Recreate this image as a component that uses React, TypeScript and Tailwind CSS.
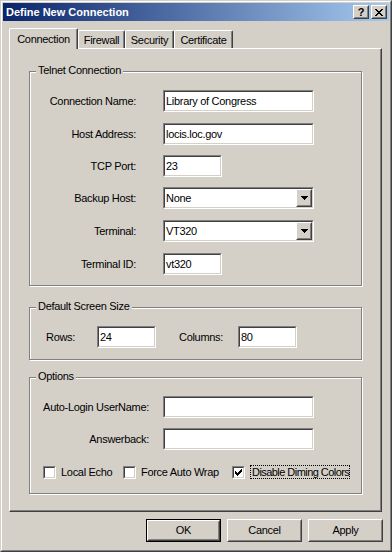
import type { ReactNode } from 'react';

function Sunken({ className = '', children }: { className?: string; children?: ReactNode }) {
    return (
        <div className={`border border-t-[#808080] border-l-[#808080] border-r-white border-b-white ${className}`}>
            <div className="flex h-full w-full items-center border border-t-[#404040] border-l-[#404040] border-r-[#d4d0c8] border-b-[#d4d0c8] bg-white">
                {children}
            </div>
        </div>
    );
}

function Raised({ className = '', children }: { className?: string; children?: ReactNode }) {
    return (
        <div className={`flex border border-t-white border-l-white border-r-[#404040] border-b-[#404040] bg-[#d4d0c8] ${className}`}>
            <div className="flex flex-1 items-center justify-center border border-t-[#d4d0c8] border-l-[#d4d0c8] border-r-[#808080] border-b-[#808080]">
                {children}
            </div>
        </div>
    );
}

function TextBox({ value = '', className }: { value?: string; className: string }) {
    return (
        <Sunken className={`h-[22px] ${className}`}>
            <span className="pl-px leading-[13px]">{value}</span>
        </Sunken>
    );
}

function Combo({ value }: { value: string }) {
    return (
        <Sunken className="h-[22px] w-[151px]">
            <span className="flex-1 pl-px leading-[13px]">{value}</span>
            <Raised className="h-full w-[16px]">
                <svg width="7" height="4" viewBox="0 0 7 4" shapeRendering="crispEdges">
                    <path d="M0 0h7v1h-7z M1 1h5v1h-5z M2 2h3v1h-3z M3 3h1v1h-1z" fill="#000" />
                </svg>
            </Raised>
        </Sunken>
    );
}

function Group({ title, className, children }: { title: string; className: string; children: ReactNode }) {
    return (
        <div className={`relative w-[333px] border border-[#808080] pt-[18px] shadow-[inset_1px_1px_0_#fff,1px_1px_0_#fff] ${className}`}>
            <span className="absolute left-[6px] top-[-8px] bg-[#d4d0c8] px-[2px] leading-[13px]">{title}</span>
            {children}
        </div>
    );
}

function Field({ label, className = '', children }: { label: string; className?: string; children: ReactNode }) {
    return (
        <div className={`flex h-[22px] items-center ${className}`}>
            <span className="w-[106px] text-right">{label}</span>
            <div className="ml-[27px]">{children}</div>
        </div>
    );
}

function CheckBox({ checked = false }: { checked?: boolean }) {
    return (
        <div className="mt-px h-[13px] w-[13px] shrink-0 border border-t-[#808080] border-l-[#808080] border-r-white border-b-white">
            <div className="flex h-full w-full items-center justify-center border border-t-[#404040] border-l-[#404040] border-r-[#d4d0c8] border-b-[#d4d0c8] bg-white">
                {checked && (
                    <svg width="7" height="7" viewBox="0 0 7 7" shapeRendering="crispEdges">
                        <path
                            d="M6 0h1v1h-1z M5 1h2v1h-2z M0 2h1v1h-1z M4 2h3v1h-3z M0 3h2v1h-2z M3 3h3v1h-3z M0 4h5v1h-5z M1 5h3v1h-3z M2 6h1v1h-1z"
                            fill="#000"
                        />
                    </svg>
                )}
            </div>
        </div>
    );
}

function Tab({ label, active = false, className }: { label: string; active?: boolean; className: string }) {
    return (
        <div
            className={`flex justify-center rounded-t-[2px] border-t border-r border-l border-t-white border-r-[#404040] border-l-white bg-[#d4d0c8] leading-[13px] shadow-[inset_-1px_0_0_#808080] ${
                active ? 'relative z-10 -mb-px h-[21px] pt-[4px]' : 'h-[18px] pt-[3px]'
            } ${className}`}
        >
            {label}
        </div>
    );
}

function PushButton({ label, isDefault = false }: { label: string; isDefault?: boolean }) {
    return (
        <div className={`flex h-[23px] w-[75px] ${isDefault ? 'border border-black' : ''}`}>
            <Raised className="flex-1">{label}</Raised>
        </div>
    );
}

export default function App() {
    return (
        <div className="h-[552px] w-[392px] border border-t-[#d4d0c8] border-r-[#404040] border-b-[#404040] border-l-[#d4d0c8] bg-[#d4d0c8] font-['Liberation_Sans',Arial,sans-serif] text-[11px] tracking-[-0.3px] whitespace-nowrap text-black">
            <div className="flex h-full flex-col border border-t-white border-r-[#808080] border-b-[#808080] border-l-white p-px">
                {/* caption */}
                <div className="flex h-[18px] items-center bg-[linear-gradient(to_right,#0a246a,#a6caf0)] pr-[2px] pl-[3px] tracking-normal">
                    <span className="flex-1 font-bold text-white">Define New Connection</span>
                    <Raised className="h-[14px] w-[16px]">
                        <span className="text-[11px] leading-none font-bold">?</span>
                    </Raised>
                    <Raised className="ml-[2px] h-[14px] w-[16px]">
                        <svg width="8" height="7" viewBox="0 0 8 7" shapeRendering="crispEdges">
                            <path
                                d="M0 0h2v1h-2z M6 0h2v1h-2z M1 1h2v1h-2z M5 1h2v1h-2z M2 2h4v1h-4z M3 3h2v1h-2z M2 4h4v1h-4z M1 5h2v1h-2z M5 5h2v1h-2z M0 6h2v1h-2z M6 6h2v1h-2z"
                                fill="#000"
                            />
                        </svg>
                    </Raised>
                </div>

                <div className="pt-[7px] pl-[6px]">
                    <div className="flex h-[20px] items-end">
                        <Tab label="Connection" active className="w-[69px]" />
                        <Tab label="Firewall" className="w-[47px]" />
                        <Tab label="Security" className="w-[49px]" />
                        <Tab label="Certificate" className="w-[59px]" />
                    </div>

                    <div className="h-[464px] w-[373px] border border-t-white border-r-[#404040] border-b-[#404040] border-l-white pt-[22px] pl-[19px] shadow-[inset_-1px_-1px_0_#808080]">
                        <Group title="Telnet Connection" className="h-[215px]">
                            <Field label="Connection Name:">
                                <TextBox value="Library of Congress" className="w-[151px]" />
                            </Field>
                            <Field label="Host Address:" className="mt-[11px]">
                                <TextBox value="locis.loc.gov" className="w-[151px]" />
                            </Field>
                            <Field label="TCP Port:" className="mt-[10px]">
                                <TextBox value="23" className="w-[59px]" />
                            </Field>
                            <Field label="Backup Host:" className="mt-[10px]">
                                <Combo value="None" />
                            </Field>
                            <Field label="Terminal:" className="mt-[11px]">
                                <Combo value="VT320" />
                            </Field>
                            <Field label="Terminal ID:" className="mt-[11px]">
                                <TextBox value="vt320" className="w-[59px]" />
                            </Field>
                        </Group>

                        <Group title="Default Screen Size" className="mt-[21px] h-[53px]">
                            <div className="flex h-[22px] items-center pl-[16px]">
                                <span className="w-[51px]">Rows:</span>
                                <TextBox value="24" className="w-[59px]" />
                                <span className="ml-[23px] w-[59px]">Columns:</span>
                                <TextBox value="80" className="w-[59px]" />
                            </div>
                        </Group>

                        <Group title="Options" className="mt-[17px] h-[117px]">
                            <div className="flex h-[22px] items-center">
                                <span className="w-[119px] text-right">Auto-Login UserName:</span>
                                <TextBox className="ml-[14px] w-[151px]" />
                            </div>
                            <div className="mt-[10px] flex h-[22px] items-center">
                                <span className="w-[119px] text-right">Answerback:</span>
                                <TextBox className="ml-[14px] w-[151px]" />
                            </div>
                            <div className="mt-[15px] flex items-start pl-[13px] leading-[14px]">
                                <div className="flex w-[80px]">
                                    <CheckBox />
                                    <span className="ml-[5px]">Local Echo</span>
                                </div>
                                <div className="flex w-[109px]">
                                    <CheckBox />
                                    <span className="ml-[5px]">Force Auto Wrap</span>
                                </div>
                                <div className="flex">
                                    <CheckBox checked />
                                    <span className="ml-[5px] border border-dotted border-black pl-px tracking-[-0.55px] leading-[12px]">
                                        Disable Diming Colors
                                    </span>
                                </div>
                            </div>
                        </Group>
                    </div>
                </div>

                <div className="mt-[7px] flex gap-[6px] pl-[143px]">
                    <PushButton label="OK" isDefault />
                    <PushButton label="Cancel" />
                    <PushButton label="Apply" />
                </div>
            </div>
        </div>
    );
}
